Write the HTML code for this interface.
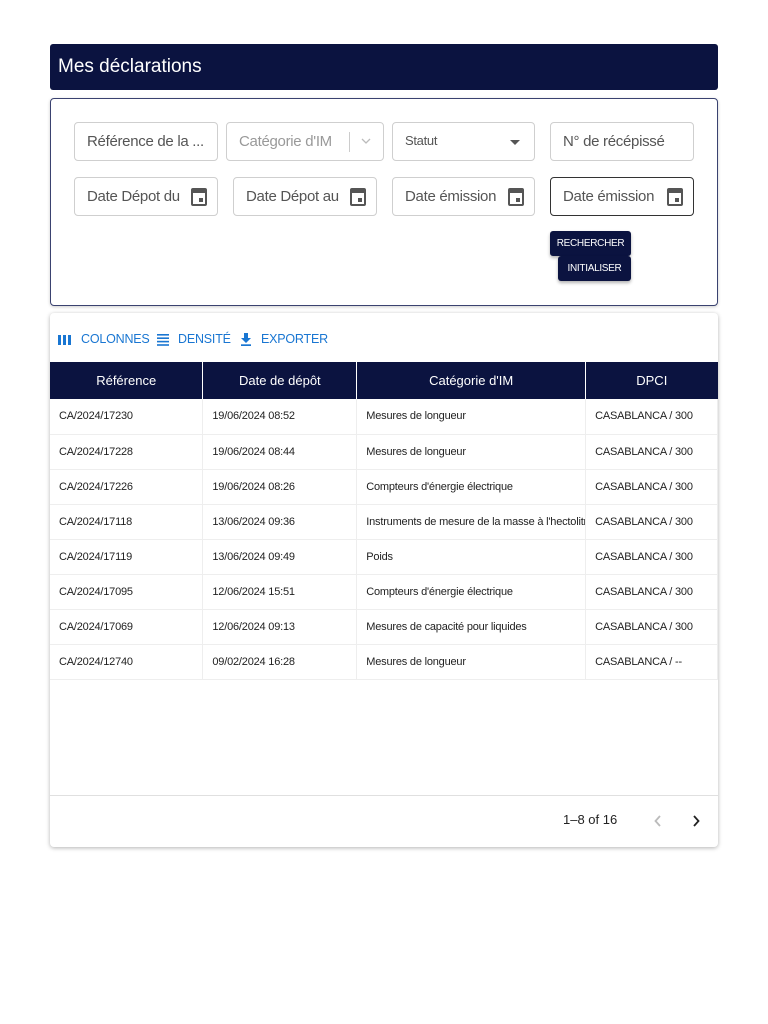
<!DOCTYPE html>
<html><head><meta charset="utf-8"><style>
*{box-sizing:border-box;margin:0;padding:0}
body{width:768px;height:1024px;background:#fff;font-family:"Liberation Sans",sans-serif;position:relative;overflow:hidden;color:#222}
.abs{position:absolute}
.title{left:50px;top:44px;width:668px;height:46px;background:#0b1340;border-radius:3px;color:#fff;font-size:19px;padding:12px 8px}
.filter{left:50px;top:98px;width:668px;height:208px;border:1px solid #3a4270;border-radius:4px;box-shadow:0 1px 3px rgba(0,0,0,.2)}
.f{position:absolute;height:39px;border:1px solid #cfcfcf;border-radius:4px;font-size:15px;color:#555;padding:10px 12px;white-space:nowrap;overflow:hidden;letter-spacing:-0.3px}
.cal{position:absolute;right:10px;top:10px;width:16px;height:18px;border:2px solid #555;border-top-width:5px;border-radius:2px}
.cal:after{content:"";position:absolute;right:2px;bottom:2px;width:4px;height:4px;background:#555}
.btn{position:absolute;background:#0b1340;color:#fff;font-size:10px;border-radius:3px;text-align:center;padding-top:7px;box-shadow:0 2px 3px rgba(0,0,0,.3);letter-spacing:-0.3px}
.card{left:50px;top:313px;width:668px;height:534px;border-radius:4px;box-shadow:0 1px 4px rgba(0,0,0,.3);overflow:hidden}
.tool{position:absolute;top:19px;font-size:12.5px;color:#1976d2;letter-spacing:-0.2px}
table{position:absolute;top:49px;left:0;width:668px;border-collapse:collapse;font-size:11px}
th{background:#0b1340;color:#fff;font-weight:normal;font-size:13px;height:37px;border-right:1px solid #fff}
td{height:35px;border-bottom:1px solid #eee;border-right:1px solid #eee;padding-left:9px;white-space:nowrap;overflow:hidden;max-width:0;letter-spacing:-0.2px}
</style></head><body>
<div class="abs title">Mes déclarations</div>
<div class="abs filter">
<div class="f" style="left:23px;top:23px;width:144px">Référence de la ...</div>
<div class="f" style="left:175px;top:23px;width:158px;color:#999">Catégorie d'IM<span style="position:absolute;left:122px;top:9px;width:1px;height:20px;background:#ccc"></span><svg style="position:absolute;right:12px;top:15px" width="10" height="6" viewBox="0 0 10 6"><path d="M1 1l4 4 4-4" fill="none" stroke="#bbb" stroke-width="1.3"/></svg></div>
<div class="f" style="left:341px;top:23px;width:143px;font-size:13px;padding-top:10px">Statut<span style="position:absolute;right:14px;top:17px;border:5px solid transparent;border-top-color:#555"></span></div>
<div class="f" style="left:499px;top:23px;width:144px">N° de récépissé</div>
<div class="f" style="left:23px;top:78px;width:144px">Date Dépot du<div class="cal"></div></div>
<div class="f" style="left:182px;top:78px;width:144px">Date Dépot au<div class="cal"></div></div>
<div class="f" style="left:341px;top:78px;width:143px">Date émission<div class="cal"></div></div>
<div class="f" style="left:499px;top:78px;width:144px;border-color:#333">Date émission<div class="cal"></div></div>
<div class="btn" style="left:499px;top:132px;width:81px;height:25px">RECHERCHER</div>
<div class="btn" style="left:507px;top:157px;width:73px;height:25px">INITIALISER</div>
</div>
<div class="abs card">
<svg class="abs" style="left:8px;top:22px" width="14" height="10" viewBox="0 0 14 10"><rect x="0" y="0" width="3" height="10" fill="#1976d2"/><rect x="5" y="0" width="3" height="10" fill="#1976d2"/><rect x="10" y="0" width="3" height="10" fill="#1976d2"/></svg>
<div class="tool" style="left:31px">COLONNES</div>
<svg class="abs" style="left:107px;top:21px" width="12" height="12" viewBox="0 0 12 12"><g fill="#1976d2"><rect y="0" width="12" height="1.6"/><rect y="3.4" width="12" height="1.6"/><rect y="6.8" width="12" height="1.6"/><rect y="10.2" width="12" height="1.6"/></g></svg>
<div class="tool" style="left:128px">DENSITÉ</div>
<svg class="abs" style="left:190px;top:20px" width="12" height="13" viewBox="0 0 12 13"><path d="M4 0h4v5h3l-5 5-5-5h3z" fill="#1976d2"/><rect x="1" y="11.3" width="10" height="1.7" fill="#1976d2"/></svg>
<div class="tool" style="left:211px">EXPORTER</div>
<table>
<tr><th style="width:153px">Référence</th><th style="width:154px">Date de dépôt</th><th style="width:229px">Catégorie d'IM</th><th style="width:132px;border-right:0">DPCI</th></tr>
<tr><td>CA/2024/17230</td><td>19/06/2024 08:52</td><td>Mesures de longueur</td><td>CASABLANCA / 300</td></tr>
<tr><td>CA/2024/17228</td><td>19/06/2024 08:44</td><td>Mesures de longueur</td><td>CASABLANCA / 300</td></tr>
<tr><td>CA/2024/17226</td><td>19/06/2024 08:26</td><td>Compteurs d'énergie électrique</td><td>CASABLANCA / 300</td></tr>
<tr><td>CA/2024/17118</td><td>13/06/2024 09:36</td><td>Instruments de mesure de la masse à l'hectolitre</td><td>CASABLANCA / 300</td></tr>
<tr><td>CA/2024/17119</td><td>13/06/2024 09:49</td><td>Poids</td><td>CASABLANCA / 300</td></tr>
<tr><td>CA/2024/17095</td><td>12/06/2024 15:51</td><td>Compteurs d'énergie électrique</td><td>CASABLANCA / 300</td></tr>
<tr><td>CA/2024/17069</td><td>12/06/2024 09:13</td><td>Mesures de capacité pour liquides</td><td>CASABLANCA / 300</td></tr>
<tr><td>CA/2024/12740</td><td>09/02/2024 16:28</td><td>Mesures de longueur</td><td>CASABLANCA / --</td></tr>
</table>
<div class="abs" style="left:0;top:482px;width:668px;height:1px;background:#e0e0e0"></div>
<div class="abs" style="left:513px;top:499px;font-size:13px">1–8 of 16</div>
<svg class="abs" style="left:604px;top:502px" width="8" height="12" viewBox="0 0 8 12"><path d="M6 1L1.5 6 6 11" fill="none" stroke="#bbb" stroke-width="1.8"/></svg>
<svg class="abs" style="left:642px;top:502px" width="8" height="12" viewBox="0 0 8 12"><path d="M2 1l4.5 5L2 11" fill="none" stroke="#222" stroke-width="1.8"/></svg>
</div>
</body></html>
